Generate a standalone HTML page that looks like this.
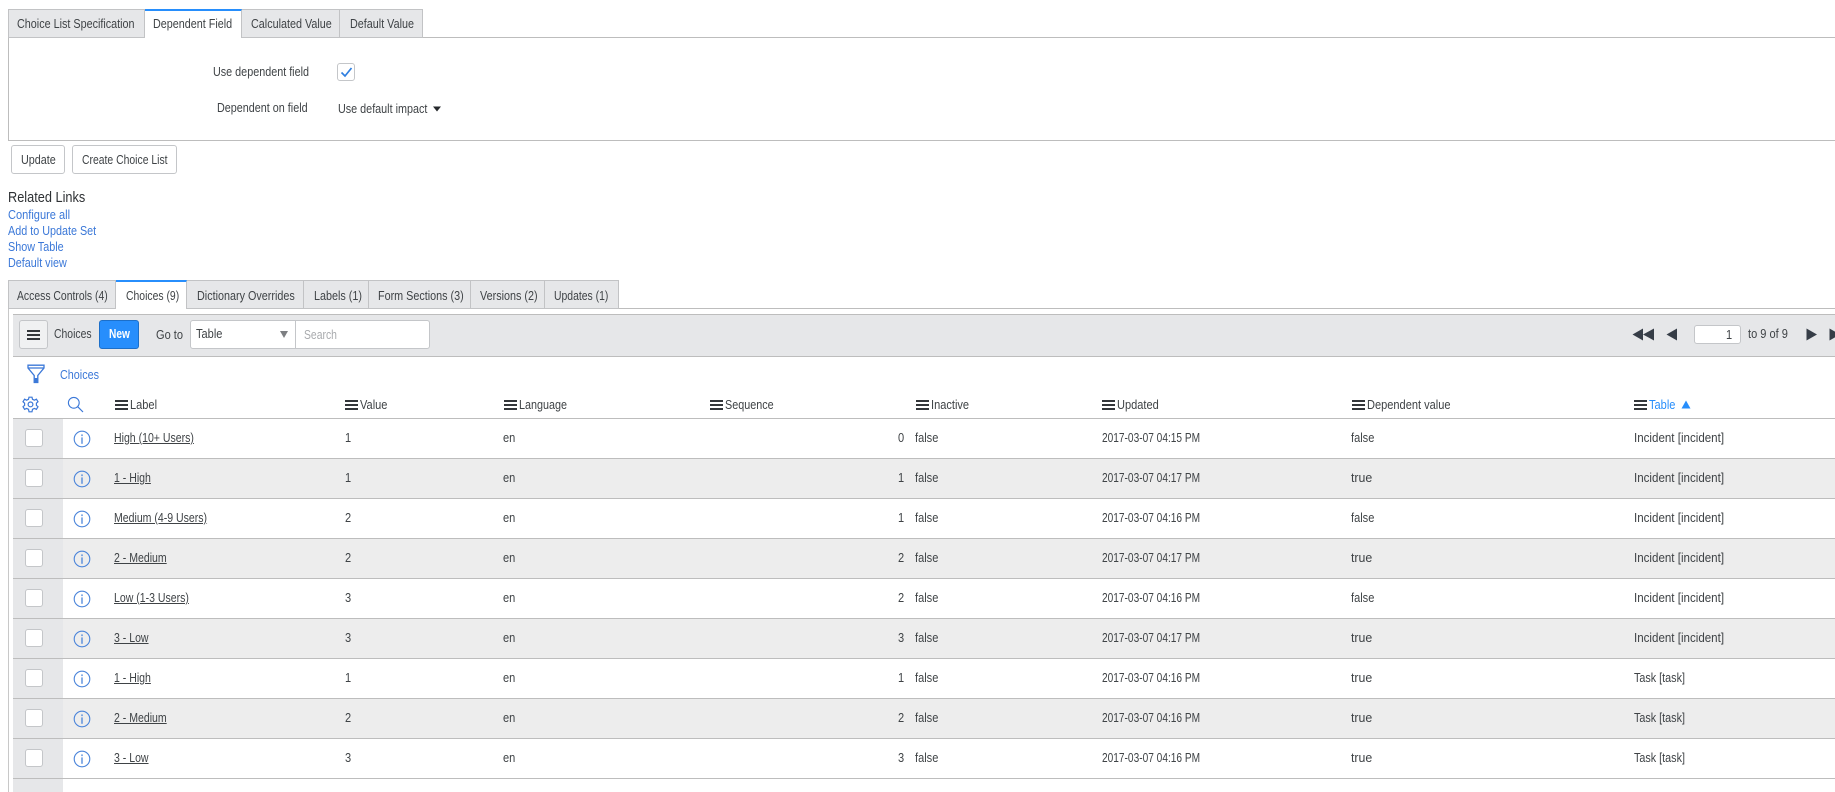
<!DOCTYPE html>
<html><head><meta charset="utf-8"><title>Choices</title>
<style>
html,body{margin:0;padding:0;background:#fff;width:1835px;height:792px;overflow:hidden}
body{position:relative;font-family:"Liberation Sans",sans-serif;font-size:13px;color:#3f4346}
div,a,span,svg{position:absolute;box-sizing:border-box}
.t{white-space:nowrap;line-height:18px;transform:scaleX(.85);transform-origin:0 50%;filter:blur(.25px)}
.n{transform:scaleX(.8)}
.m{transform:scaleX(.83)}
.lb{transform:scaleX(.81)}
.d{transform:scaleX(.78)}
.it{transform:scaleX(.89)}
.tr{transform:scaleX(.95)}
.l{color:#3b78d8}
.tab{background:#e6e7e9;border:1px solid #c2c3c5;border-left:0}
.act{background:#fff;border-top:2px solid #278efc;border-bottom:0;z-index:2}
.cb{width:18px;height:18px;background:#fff;border:1px solid #c4c6c9;border-radius:3px}
.r{left:13px;width:1822px;height:40px;border-bottom:1px solid #bdbdbd;background:#fff}
.g{background:#ededed}
.c{left:0;top:0;width:50px;height:39px;background:#e6e7e9}
.r .t{top:10px}
.u{text-decoration:underline}
.info{left:60px;top:10.5px;width:18px;height:18px}
.h{width:13px;height:10px;border-top:2px solid #33363a;border-bottom:2px solid #33363a}
.h:after{content:"";position:absolute;left:0;right:0;top:2px;height:2px;background:#33363a}
.btn{background:#fff;border:1px solid #c4c6c9;border-radius:3px}
</style></head>
<body>
<svg width="0" height="0" style="position:absolute"><defs>
<symbol id="i" viewBox="0 0 18 18"><circle cx="9" cy="9" r="7.8" fill="none" stroke="#4a84da" stroke-width="1.1"/><rect x="8.35" y="7.4" width="1.3" height="6.4" fill="#4a84da"/><rect x="8.35" y="4.4" width="1.3" height="1.7" fill="#4a84da"/></symbol>
</defs></svg>

<!-- top form tabs -->
<div style="left:8px;top:37px;width:1827px;height:104px;border:1px solid #bdbdbd;border-right:0"></div>
<div class="tab" style="left:8px;top:9px;width:137px;height:29px;border-left:1px solid #c2c3c5"></div>
<div class="tab act" style="left:145px;top:9px;width:97px;height:29px"></div>
<div class="tab" style="left:242px;top:9px;width:98px;height:29px"></div>
<div class="tab" style="left:340px;top:9px;width:83px;height:29px"></div>
<span class="t m" style="left:17px;top:15px;z-index:3">Choice List Specification</span>
<span class="t m" style="left:153px;top:15px;z-index:3">Dependent Field</span>
<span class="t m" style="left:251px;top:15px;z-index:3">Calculated Value</span>
<span class="t m" style="left:350px;top:15px;z-index:3">Default Value</span>

<span class="t m" style="left:213px;top:63px">Use dependent field</span>
<div class="cb" style="left:337px;top:63px"></div>
<svg style="left:340px;top:66px" width="13" height="12" viewBox="0 0 13 12"><path d="M1.5 6.5L5 10L11.5 2" fill="none" stroke="#2f7fe0" stroke-width="1.7"/></svg>
<span class="t m" style="left:217px;top:99px">Dependent on field</span>
<span class="t m" style="left:337.5px;top:100px">Use default impact</span>
<svg style="left:433px;top:106px" width="8" height="6" viewBox="0 0 8 6"><path d="M0 0.5H8L4 5.5Z" fill="#26292c"/></svg>

<div class="btn" style="left:11px;top:145px;width:54px;height:29px"></div>
<span class="t m" style="left:21px;top:151px">Update</span>
<div class="btn" style="left:72px;top:145px;width:105px;height:29px"></div>
<span class="t n" style="left:82px;top:151px">Create Choice List</span>

<span class="t" style="left:8px;top:189px;font-size:15px;color:#2e3134">Related Links</span>
<span class="t l" style="left:8px;top:206px">Configure all</span>
<span class="t l m" style="left:8px;top:222px">Add to Update Set</span>
<span class="t l m" style="left:8px;top:238px">Show Table</span>
<span class="t l m" style="left:8px;top:254px">Default view</span>

<!-- related tabs -->
<div style="left:8px;top:308px;width:1827px;height:1px;background:#bdbdbd"></div>
<div style="left:8px;top:308px;width:1px;height:484px;background:#c8c8c8"></div>
<div class="tab" style="left:8px;top:280px;width:108px;height:29px;border-left:1px solid #c2c3c5"></div>
<div class="tab act" style="left:116px;top:280px;width:71px;height:29px"></div>
<div class="tab" style="left:187px;top:280px;width:117px;height:29px"></div>
<div class="tab" style="left:304px;top:280px;width:65px;height:29px"></div>
<div class="tab" style="left:369px;top:280px;width:102px;height:29px"></div>
<div class="tab" style="left:471px;top:280px;width:74px;height:29px"></div>
<div class="tab" style="left:545px;top:280px;width:74px;height:29px"></div>
<span class="t n" style="left:17px;top:287px;z-index:3">Access Controls (4)</span>
<span class="t n" style="left:126px;top:287px;z-index:3">Choices (9)</span>
<span class="t m" style="left:197px;top:287px;z-index:3">Dictionary Overrides</span>
<span class="t m" style="left:314px;top:287px;z-index:3">Labels (1)</span>
<span class="t m" style="left:378px;top:287px;z-index:3">Form Sections (3)</span>
<span class="t m" style="left:480px;top:287px;z-index:3">Versions (2)</span>
<span class="t n" style="left:554px;top:287px;z-index:3">Updates (1)</span>

<!-- toolbar -->
<div style="left:13px;top:314px;width:1822px;height:43px;background:#e6e7e9;border-top:1px solid #bdbdbd;border-bottom:1px solid #bdbdbd"></div>
<div class="btn" style="left:19px;top:320px;width:29px;height:29px;background:#f0f1f2"></div>
<div class="h" style="left:27px;top:330px;width:13px;height:10px"></div>
<span class="t n" style="left:54px;top:325px">Choices</span>
<div style="left:99px;top:320px;width:40px;height:29px;background:#278efc;border:1px solid #1c6fc9;border-radius:3px"></div>
<span class="t d" style="left:109px;top:325px;color:#fff;font-weight:bold">New</span>
<span class="t" style="left:156px;top:326px">Go to</span>
<div style="left:190px;top:320px;width:106px;height:29px;background:#fff;border:1px solid #c4c6c9;border-radius:3px 0 0 3px"></div>
<span class="t" style="left:196px;top:325px">Table</span>
<svg style="left:280px;top:331px" width="8" height="7" viewBox="0 0 8 7"><path d="M0 0H8L4 7Z" fill="#7d7f82"/></svg>
<div style="left:295px;top:320px;width:135px;height:29px;background:#fff;border:1px solid #c4c6c9;border-radius:0 3px 3px 0"></div>
<span class="t n" style="left:304px;top:326px;color:#a9abae">Search</span>

<svg style="left:1632px;top:328px" width="23" height="13" viewBox="0 0 23 13"><path d="M0.5 6.5L11 0.5V12.5ZM11 6.5L22 0.5V12.5Z" fill="#363d47"/></svg>
<svg style="left:1666px;top:328px" width="12" height="13" viewBox="0 0 12 13"><path d="M0.5 6.5L11 0.5V12.5Z" fill="#363d47"/></svg>
<div class="btn" style="left:1694px;top:325px;width:47px;height:19px"></div>
<span class="t" style="left:1726px;top:326px">1</span>
<span class="t" style="left:1748px;top:325px">to 9 of 9</span>
<svg style="left:1806px;top:328px" width="12" height="13" viewBox="0 0 12 13"><path d="M11 6.5L0.5 0.5V12.5Z" fill="#363d47"/></svg>
<svg style="left:1829px;top:328px" width="12" height="13" viewBox="0 0 12 13"><path d="M11 6.5L0.5 0.5V12.5Z" fill="#363d47"/></svg>

<!-- filter line -->
<svg style="left:27px;top:364px" width="18" height="20" viewBox="0 0 18 20"><path d="M1 1.2H17V4L10.8 11.5V18.5H7.2V11.5L1 4ZM1 4H17" fill="none" stroke="#3b78d8" stroke-width="1.3"/><rect x="7.6" y="14" width="2.8" height="4.5" fill="#3b78d8"/></svg>
<span class="t l m" style="left:60px;top:366px">Choices</span>

<!-- header -->
<svg style="left:22px;top:396px" width="17" height="17" viewBox="0 0 17 17"><path d="M7 1.2H10L10.5 3.3L12.4 4.2L14.4 3.2L16 5.8L14.4 7.2V9.3L16 10.7L14.4 13.3L12.4 12.4L10.5 13.3L10 15.8H7L6.5 13.3L4.6 12.4L2.6 13.3L1 10.7L2.6 9.3V7.2L1 5.8L2.6 3.2L4.6 4.2L6.5 3.3Z" fill="none" stroke="#3b78d8" stroke-width="1.2"/><circle cx="8.5" cy="8.4" r="2.4" fill="none" stroke="#3b78d8" stroke-width="1.2"/></svg>
<svg style="left:67px;top:396px" width="17" height="17" viewBox="0 0 17 17"><circle cx="6.8" cy="6.8" r="5.4" fill="none" stroke="#3b78d8" stroke-width="1.1"/><path d="M10.7 10.7L16 16" stroke="#3b78d8" stroke-width="1.2"/></svg>
<div class="h" style="left:115px;top:400px"></div><span class="t" style="left:130px;top:396px">Label</span>
<div class="h" style="left:345px;top:400px"></div><span class="t" style="left:360px;top:396px">Value</span>
<div class="h" style="left:504px;top:400px"></div><span class="t m" style="left:519px;top:396px">Language</span>
<div class="h" style="left:710px;top:400px"></div><span class="t m" style="left:725px;top:396px">Sequence</span>
<div class="h" style="left:916px;top:400px"></div><span class="t" style="left:931px;top:396px">Inactive</span>
<div class="h" style="left:1102px;top:400px"></div><span class="t" style="left:1117px;top:396px">Updated</span>
<div class="h" style="left:1352px;top:400px"></div><span class="t" style="left:1367px;top:396px">Dependent value</span>
<div class="h" style="left:1634px;top:400px"></div><span class="t" style="left:1649px;top:396px;color:#278efc">Table</span>
<svg style="left:1681px;top:400px" width="10" height="9" viewBox="0 0 10 9"><path d="M5 0.5L9.5 8.5H0.5Z" fill="#278efc"/></svg>
<div style="left:13px;top:418px;width:1822px;height:1px;background:#bdbdbd"></div>

<!-- rows -->
<div class="r" style="top:419px"><div class="c"></div><div class="cb" style="left:12px;top:10px"></div><svg class="info"><use href="#i"/></svg>
<span class="t u lb" style="left:101px">High (10+ Users)</span><span class="t" style="left:332px">1</span><span class="t" style="left:490px">en</span><span class="t" style="left:885px">0</span><span class="t" style="left:902px">false</span><span class="t d" style="left:1089px">2017-03-07 04:15 PM</span><span class="t" style="left:1338px">false</span><span class="t it" style="left:1621px">Incident [incident]</span></div>

<div class="r g" style="top:459px"><div class="c"></div><div class="cb" style="left:12px;top:10px"></div><svg class="info"><use href="#i"/></svg>
<span class="t u lb" style="left:101px">1 - High</span><span class="t" style="left:332px">1</span><span class="t" style="left:490px">en</span><span class="t" style="left:885px">1</span><span class="t" style="left:902px">false</span><span class="t d" style="left:1089px">2017-03-07 04:17 PM</span><span class="t tr" style="left:1338px">true</span><span class="t it" style="left:1621px">Incident [incident]</span></div>

<div class="r" style="top:499px"><div class="c"></div><div class="cb" style="left:12px;top:10px"></div><svg class="info"><use href="#i"/></svg>
<span class="t u lb" style="left:101px">Medium (4-9 Users)</span><span class="t" style="left:332px">2</span><span class="t" style="left:490px">en</span><span class="t" style="left:885px">1</span><span class="t" style="left:902px">false</span><span class="t d" style="left:1089px">2017-03-07 04:16 PM</span><span class="t" style="left:1338px">false</span><span class="t it" style="left:1621px">Incident [incident]</span></div>

<div class="r g" style="top:539px"><div class="c"></div><div class="cb" style="left:12px;top:10px"></div><svg class="info"><use href="#i"/></svg>
<span class="t u lb" style="left:101px">2 - Medium</span><span class="t" style="left:332px">2</span><span class="t" style="left:490px">en</span><span class="t" style="left:885px">2</span><span class="t" style="left:902px">false</span><span class="t d" style="left:1089px">2017-03-07 04:17 PM</span><span class="t tr" style="left:1338px">true</span><span class="t it" style="left:1621px">Incident [incident]</span></div>

<div class="r" style="top:579px"><div class="c"></div><div class="cb" style="left:12px;top:10px"></div><svg class="info"><use href="#i"/></svg>
<span class="t u lb" style="left:101px">Low (1-3 Users)</span><span class="t" style="left:332px">3</span><span class="t" style="left:490px">en</span><span class="t" style="left:885px">2</span><span class="t" style="left:902px">false</span><span class="t d" style="left:1089px">2017-03-07 04:16 PM</span><span class="t" style="left:1338px">false</span><span class="t it" style="left:1621px">Incident [incident]</span></div>

<div class="r g" style="top:619px"><div class="c"></div><div class="cb" style="left:12px;top:10px"></div><svg class="info"><use href="#i"/></svg>
<span class="t u lb" style="left:101px">3 - Low</span><span class="t" style="left:332px">3</span><span class="t" style="left:490px">en</span><span class="t" style="left:885px">3</span><span class="t" style="left:902px">false</span><span class="t d" style="left:1089px">2017-03-07 04:17 PM</span><span class="t tr" style="left:1338px">true</span><span class="t it" style="left:1621px">Incident [incident]</span></div>

<div class="r" style="top:659px"><div class="c"></div><div class="cb" style="left:12px;top:10px"></div><svg class="info"><use href="#i"/></svg>
<span class="t u lb" style="left:101px">1 - High</span><span class="t" style="left:332px">1</span><span class="t" style="left:490px">en</span><span class="t" style="left:885px">1</span><span class="t" style="left:902px">false</span><span class="t d" style="left:1089px">2017-03-07 04:16 PM</span><span class="t tr" style="left:1338px">true</span><span class="t m" style="left:1621px">Task [task]</span></div>

<div class="r g" style="top:699px"><div class="c"></div><div class="cb" style="left:12px;top:10px"></div><svg class="info"><use href="#i"/></svg>
<span class="t u lb" style="left:101px">2 - Medium</span><span class="t" style="left:332px">2</span><span class="t" style="left:490px">en</span><span class="t" style="left:885px">2</span><span class="t" style="left:902px">false</span><span class="t d" style="left:1089px">2017-03-07 04:16 PM</span><span class="t tr" style="left:1338px">true</span><span class="t m" style="left:1621px">Task [task]</span></div>

<div class="r" style="top:739px"><div class="c"></div><div class="cb" style="left:12px;top:10px"></div><svg class="info"><use href="#i"/></svg>
<span class="t u lb" style="left:101px">3 - Low</span><span class="t" style="left:332px">3</span><span class="t" style="left:490px">en</span><span class="t" style="left:885px">3</span><span class="t" style="left:902px">false</span><span class="t d" style="left:1089px">2017-03-07 04:16 PM</span><span class="t tr" style="left:1338px">true</span><span class="t m" style="left:1621px">Task [task]</span></div>

<div style="left:13px;top:779px;width:50px;height:13px;background:#e6e7e9"></div>
</body></html>
